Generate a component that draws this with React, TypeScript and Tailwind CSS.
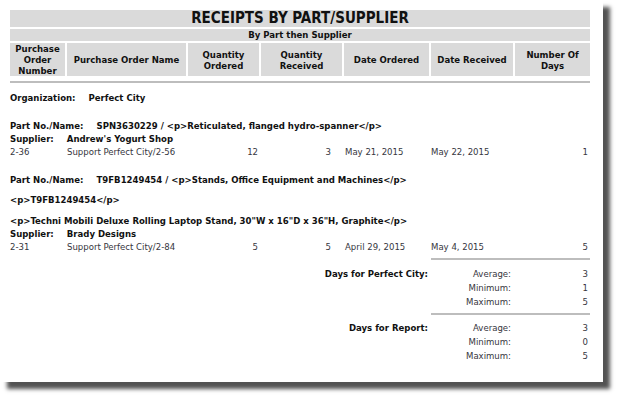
import React from "react";

const cols = "grid grid-cols-[55px_119px_71px_81px_85px_82px_75px] gap-x-[2px]";

function Hd({ children }: { children: React.ReactNode }) {
  return (
    <div className="bg-[#dadada] flex items-center justify-center text-center leading-[11px] font-bold text-[9.5px] text-[#111]">
      {children}
    </div>
  );
}

function Label({ l, v }: { l: string; v: string }) {
  return (
    <div className="h-[13px] leading-[13px] flex">
      <span className="font-bold text-[#111]">{l}</span>
      <span className="font-bold text-[#111] ml-[13px]">{v}</span>
    </div>
  );
}

function DataRow({ a }: { a: string[] }) {
  return (
    <div className={`${cols} h-[13px] leading-[13px] text-[#363640]`}>
      <div>{a[0]}</div>
      <div>{a[1]}</div>
      <div className="text-right pr-[1px]">{a[2]}</div>
      <div className="text-right pr-[11px]">{a[3]}</div>
      <div className="pl-[1px]">{a[4]}</div>
      <div>{a[5]}</div>
      <div className="text-right pr-[2px]">{a[6]}</div>
    </div>
  );
}

function Summary({ title, vals }: { title: string; vals: string[] }) {
  const names = ["Average:", "Minimum:", "Maximum:"];
  return (
    <div className="flex flex-col">
      {names.map((n, i) => (
        <div key={n} className={`${cols} h-[14px] leading-[14px]`}>
          <div className="col-span-5 text-right font-bold text-[#111] pr-[1px]">{i === 0 ? title : ""}</div>
          <div className="text-right pr-[2px] text-[#363640]">{n}</div>
          <div className="text-right pr-[2px] text-[#363640]">{vals[i]}</div>
        </div>
      ))}
    </div>
  );
}

export default function App() {
  return (
    <div
      className="w-[620px] h-[395px] bg-white overflow-hidden"
      style={{ fontFamily: '"DejaVu Sans Condensed", "Liberation Sans", sans-serif' }}
    >
      <div className="w-[603px] h-[382px] bg-white shadow-[7px_7px_4px_rgba(0,0,0,0.68)] pt-[10px] pl-[10px] text-[9.5px]">
        <div className="w-[580px] flex flex-col">
          <div className="h-[17px] bg-[#dadada] flex items-center justify-center font-bold text-[15px] text-[#111] leading-none">
            RECEIPTS BY PART/SUPPLIER
          </div>
          <div className="h-[12px] mt-[2px] bg-[#dadada] flex items-center justify-center font-bold text-[9.5px] text-[#111] leading-none">
            By Part then Supplier
          </div>
          <div className={`${cols} h-[33px] mt-[2px]`}>
            <Hd>Purchase<br />Order<br />Number</Hd>
            <Hd>Purchase Order Name</Hd>
            <Hd>Quantity<br />Ordered</Hd>
            <Hd>Quantity<br />Received</Hd>
            <Hd>Date Ordered</Hd>
            <Hd>Date Received</Hd>
            <Hd>Number Of<br />Days</Hd>
          </div>
          <div className="h-[2px] mt-[5px] bg-[#bdbdbd]" />

          <div className="mt-[8px]">
            <Label l="Organization:" v="Perfect City" />
          </div>

          <div className="mt-[15px]">
            <Label l="Part No./Name:" v="SPN3630229 / <p>Reticulated, flanged hydro-spanner</p>" />
          </div>
          <Label l="Supplier:" v="Andrew's Yogurt Shop" />
          <DataRow a={["2-36", "Support Perfect City/2-56", "12", "3", "May 21, 2015", "May 22, 2015", "1"]} />

          <div className="mt-[15px]">
            <Label l="Part No./Name:" v="T9FB1249454 / <p>Stands, Office Equipment and Machines</p>" />
          </div>
          <div className="mt-[7px] h-[13px] leading-[13px] font-bold text-[#111]">&lt;p&gt;T9FB1249454&lt;/p&gt;</div>
          <div className="mt-[8px] h-[13px] leading-[13px] font-bold text-[#111]">
            &lt;p&gt;Techni Mobili Deluxe Rolling Laptop Stand, 30"W x 16"D x 36"H, Graphite&lt;/p&gt;
          </div>
          <Label l="Supplier:" v="Brady Designs" />
          <DataRow a={["2-31", "Support Perfect City/2-84", "5", "5", "April 29, 2015", "May 4, 2015", "5"]} />

          <div className={`${cols} mt-[5px]`}>
            <div className="col-start-6 col-span-2 h-[2px] bg-[#bdbdbd]" />
          </div>
          <div className="mt-[7px]">
            <Summary title="Days for Perfect City:" vals={["3", "1", "5"]} />
          </div>
          <div className={`${cols} mt-[4px]`}>
            <div className="col-start-6 col-span-2 h-[2px] bg-[#bdbdbd]" />
          </div>
          <div className="mt-[6px]">
            <Summary title="Days for Report:" vals={["3", "0", "5"]} />
          </div>
        </div>
      </div>
    </div>
  );
}
